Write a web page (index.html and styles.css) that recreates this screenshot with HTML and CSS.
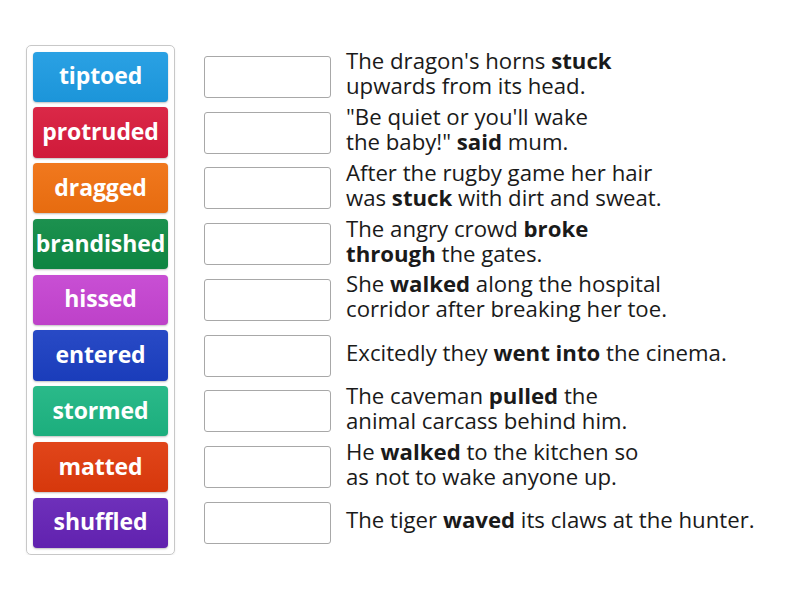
FILE: index.html
```html
<!DOCTYPE html>
<html lang="en">
<head>
    <meta charset="UTF-8">
    <title>Match up</title>
    <link rel="stylesheet" href="styles.css">
</head>
<body>
    <div class="activity">
        <div class="word-bank">
            <div class="tile blue">tiptoed</div>
            <div class="tile red">protruded</div>
            <div class="tile orange">dragged</div>
            <div class="tile green">brandished</div>
            <div class="tile pink">hissed</div>
            <div class="tile navy">entered</div>
            <div class="tile teal">stormed</div>
            <div class="tile rust">matted</div>
            <div class="tile purple">shuffled</div>
        </div>

        <div class="sentences">
            <div class="row">
                <div class="drop-box"></div>
                <p class="sentence">The dragon's horns <b>stuck</b><br>upwards from its head.</p>
            </div>
            <div class="row">
                <div class="drop-box"></div>
                <p class="sentence">"Be quiet or you'll wake<br>the baby!" <b>said</b> mum.</p>
            </div>
            <div class="row">
                <div class="drop-box"></div>
                <p class="sentence">After the rugby game her hair<br>was <b>stuck</b> with dirt and sweat.</p>
            </div>
            <div class="row">
                <div class="drop-box"></div>
                <p class="sentence">The angry crowd <b>broke</b><br><b>through</b> the gates.</p>
            </div>
            <div class="row">
                <div class="drop-box"></div>
                <p class="sentence">She <b>walked</b> along the hospital<br>corridor after breaking her toe.</p>
            </div>
            <div class="row">
                <div class="drop-box"></div>
                <p class="sentence">Excitedly they <b>went into</b> the cinema.</p>
            </div>
            <div class="row">
                <div class="drop-box"></div>
                <p class="sentence">The caveman <b>pulled</b> the<br>animal carcass behind him.</p>
            </div>
            <div class="row">
                <div class="drop-box"></div>
                <p class="sentence">He <b>walked</b> to the kitchen so<br>as not to wake anyone up.</p>
            </div>
            <div class="row">
                <div class="drop-box"></div>
                <p class="sentence">The tiger <b>waved</b> its claws at the hunter.</p>
            </div>
        </div>
    </div>
</body>
</html>
```

FILE: styles.css
```css
/* --- Base --- */
body {
    margin: 0;
    background: #fff;
    font-family: "Open Sans", "Noto Sans", sans-serif;
    color: #1a1a1a;
}

.activity {
    display: flex;
    align-items: flex-start;
    padding: 45px 0 0 26px;
}

/* --- Word bank (left column) --- */
.word-bank {
    width: 135px;
    padding: 5.7px 6px;
    border: 1px solid #c8c8c8;
    border-radius: 5px;
    box-shadow: 0 1px 2px rgba(0, 0, 0, 0.08);
    display: flex;
    flex-direction: column;
    gap: 5.5px;
}

.tile {
    height: 50.25px;
    padding-bottom: 3px;
    box-sizing: border-box;
    border-radius: 4px;
    display: flex;
    align-items: center;
    justify-content: center;
    color: #fff;
    font-size: 23px;
    font-weight: 700;
    letter-spacing: -0.1px;
    background-image: linear-gradient(rgba(255, 255, 255, 0.06), rgba(0, 0, 0, 0.04));
    box-shadow: 0 1px 2px rgba(0, 0, 0, 0.25);
}

.blue   { background-color: #1d9be2; }
.red    { background-color: #d81b3c; }
.orange { background-color: #f07010; }
.green  { background-color: #0e8a44; }
.pink   { background-color: #c544d1; }
.navy   { background-color: #1b3fc2; }
.teal   { background-color: #1db582; }
.rust   { background-color: #df3a0c; }
.purple { background-color: #6523b6; }

/* --- Sentences (right column) --- */
.sentences {
    margin-left: 29px;
    padding-top: 6.7px;
    display: flex;
    flex-direction: column;
    gap: 5.5px;
}

.row {
    height: 50.25px;
    display: flex;
    align-items: center;
}

.drop-box {
    width: 125px;
    height: 40px;
    border: 1px solid #a8a8a8;
    border-radius: 3px;
    background: #fff;
    flex-shrink: 0;
}

.sentence {
    margin: 0 0 7px 15px;
    font-size: 22.2px;
    line-height: 25px;
    white-space: nowrap;
}

.sentence b {
    font-weight: 700;
}
```
